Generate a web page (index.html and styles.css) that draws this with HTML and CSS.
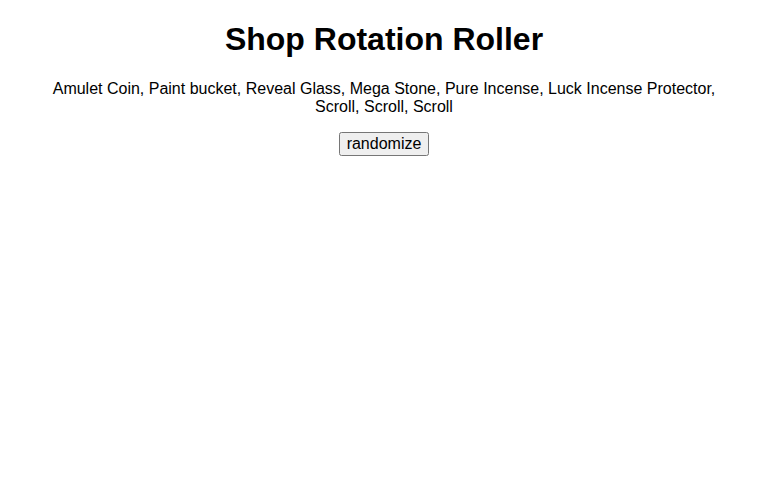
FILE: index.html
```html
<!DOCTYPE html>
<html lang="en">

<head>
    <meta charset="UTF-8">
    <meta name="viewport" content="width=device-width, initial-scale=1.0">
    <title>Shop Rotation Roller</title>
    <link rel="stylesheet" href="styles.css">
</head>

<body>

    <div class="roller">
        <h1>Shop Rotation Roller</h1>
        <p class="items">Amulet Coin, Paint bucket, Reveal Glass, Mega Stone, Pure Incense, Luck Incense Protector, Scroll, Scroll, Scroll</p>
        <button class="randomize">randomize</button>
    </div>

</body>

</html>
```

FILE: styles.css
```css
body {
    margin: 0;
    font-family: 'Liberation Sans', Arial, sans-serif;
    color: #000;
    background-color: #fff;
}

.roller {
    max-width: 690px;
    margin: 0 auto;
    text-align: center;
}

.randomize {
    font-family: 'Liberation Sans', Arial, sans-serif;
    font-size: 16px;
}
```
